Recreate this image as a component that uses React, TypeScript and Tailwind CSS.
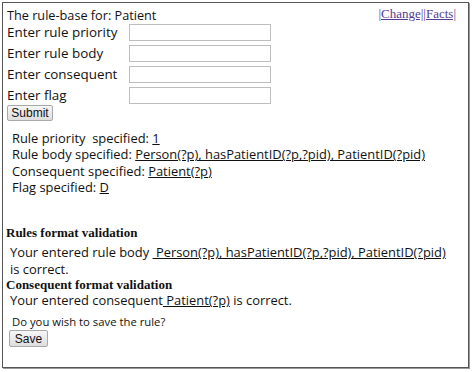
import React from "react";

const sans = "font-['Open_Sans',sans-serif]";
const serif = "font-['Liberation_Serif',serif]";

const fields = [
  "Enter rule priority",
  "Enter rule body",
  "Enter consequent",
  "Enter flag",
];

function GrayButton({ label, className }: { label: string; className: string }) {
  return (
    <button
      className={`flex items-center justify-center rounded-[2px] border border-[#a9a9a9] bg-gradient-to-b from-[#f6f6f6] to-[#dedede] font-['Liberation_Sans',sans-serif] text-[12px] text-[#111] ${className}`}
    >
      {label}
    </button>
  );
}

export default function App() {
  return (
    <div className="h-[372px] w-[474px] bg-white pl-[2px] pt-[2px]">
      <div
        className={`flex h-[366px] w-[467px] flex-col border border-[#555] text-[#111] shadow-[1px_1px_0_#999] ${sans}`}
      >
        <div className="mt-[3px] flex h-[18px] items-center justify-between pl-[4px] pr-[12px]">
          <span className="text-[12.7px] leading-[18px]">The rule-base for: Patient</span>
          <span className={`${serif} mt-[-2px] text-[13px] leading-[18px] text-[#553c8f] underline`}>
            |Change||Facts|
          </span>
        </div>

        <div className="flex flex-col gap-[4px] pl-[4px]">
          {fields.map((f) => (
            <div key={f} className="flex h-[17px] items-center">
              <span className="w-[122px] text-[13.4px] leading-[17px]">{f}</span>
              <input className="h-[17px] w-[142px] border border-[#bdbdbd] bg-white" />
            </div>
          ))}
        </div>

        <GrayButton label="Submit" className="ml-[4px] mt-[1px] h-[16px] w-[46px]" />

        <div className="mt-[9px] pl-[9px] text-[12.9px] leading-[16.3px]">
          <div>
            Rule priority&nbsp; specified: <u>1</u>
          </div>
          <div>
            Rule body specified: <u>Person(?p), hasPatientID(?p,?pid), PatientID(?pid)</u>
          </div>
          <div>
            Consequent specified: <u>Patient(?p)</u>
          </div>
          <div>
            Flag specified: <u>D</u>
          </div>
        </div>

        <div className={`${serif} mt-[30px] pl-[3px] text-[13px] font-bold leading-[16px]`}>
          Rules format validation
        </div>
        <div className="mt-[3px] pl-[7px] text-[12.9px] leading-[16.6px]">
          <div>
            Your entered rule body <u>&nbsp;Person(?p), hasPatientID(?p,?pid), PatientID(?pid)</u>
          </div>
          <div>is correct.</div>
        </div>

        <div className={`${serif} mt-[1px] pl-[3px] text-[13px] font-bold leading-[13px]`}>
          Consequent format validation
        </div>
        <div className="mt-[2px] pl-[7px] text-[12.9px] leading-[14px]">
          Your entered consequent<u>&nbsp;Patient(?p)</u> is correct.
        </div>

        <div className="mt-[8px] pl-[9px] text-[11.3px] leading-[14px]">
          Do you wish to save the rule?
        </div>
        <GrayButton label="Save" className="ml-[6px] mt-[1px] h-[17px] w-[39px]" />
      </div>
    </div>
  );
}
